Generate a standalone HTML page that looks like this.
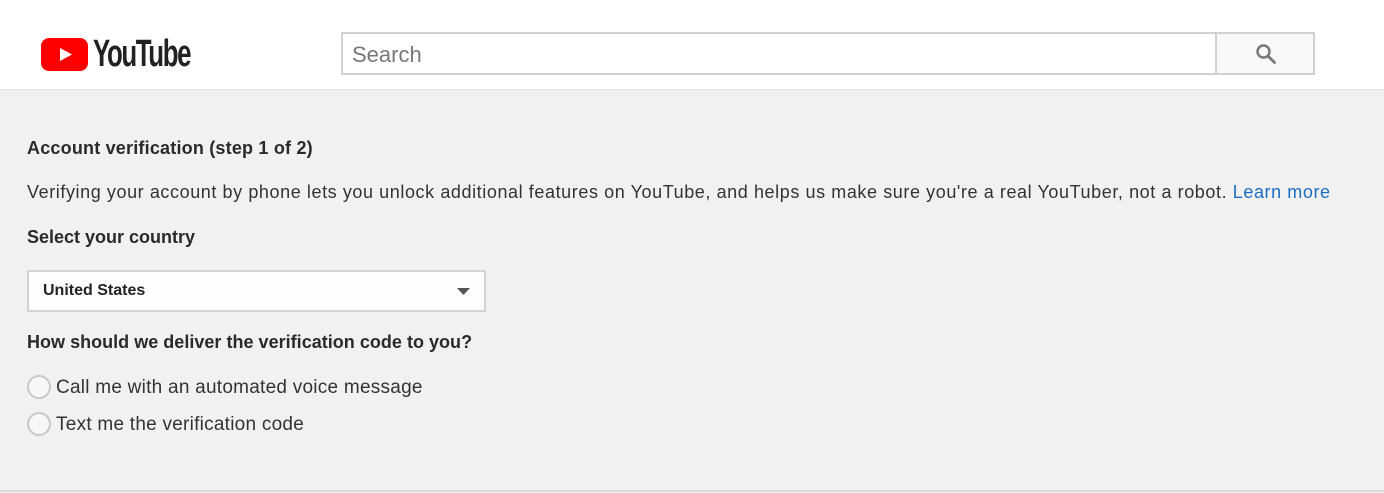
<!DOCTYPE html>
<html><head><style>
*{margin:0;padding:0;box-sizing:border-box}
body{width:1384px;height:493px;background:#f1f1f1;font-family:"Liberation Sans",Arial,sans-serif;color:#222;position:relative;overflow:hidden}
#hd{position:absolute;left:0;top:0;width:1384px;height:90px;background:#fff;border-bottom:1px solid #e4e4e4}
.abs{position:absolute;white-space:nowrap}
#search{position:absolute;left:341px;top:32px;width:875px;height:43px;border:2px solid #d0d0d0;border-right:1px solid #d0d0d0;background:#fff;font-size:22px;color:#777;padding:8px 9px}
#btn{position:absolute;left:1215px;top:32px;width:100px;height:43px;border:2px solid #d0d0d0;background:#f8f8f8}
#sel{position:absolute;left:27px;top:270px;width:459px;height:42px;border:2px solid #d3d3d3;background:#fdfdfd;font-size:16px;padding:10px 14px;font-weight:bold;color:#222}
.radio{position:absolute;left:27px;width:24px;height:24px;border:2px solid #c8c8c8;border-radius:50%;background:#f7f7f7}
.h{font-size:18px;font-weight:bold;color:#2a2a2a}
</style></head><body>
<div id="hd">
<svg class="abs" style="left:41px;top:38px" width="47" height="33" viewBox="0 0 47 33"><rect width="47" height="33" rx="8" fill="#f00"/><path d="M19 10 L31 16.5 L19 23Z" fill="#fff"/></svg>
<div class="abs" style="left:93px;top:33px;font-size:38px;font-weight:bold;color:#222;letter-spacing:-2px;transform:scaleX(0.68);transform-origin:0 0">YouTube</div>
<div id="search">Search</div>
<div id="btn"><svg style="position:absolute;left:38px;top:9px" width="22" height="22" viewBox="0 0 22 22"><circle cx="8.5" cy="8.5" r="6" fill="none" stroke="#777" stroke-width="2.4"/><path d="M13 13 L19.5 19.5" stroke="#777" stroke-width="2.8" stroke-linecap="round"/></svg></div>
</div>
<div class="abs h" style="left:27px;top:138px;letter-spacing:0.2px">Account verification (step 1 of 2)</div>
<div class="abs" style="left:27px;top:182px;font-size:18px;color:#333;letter-spacing:0.585px">Verifying your account by phone lets you unlock additional features on YouTube, and helps us make sure you're a real YouTuber, not a robot. <span style="color:#1a6ec4">Learn more</span></div>
<div class="abs h" style="left:27px;top:227px;letter-spacing:0px">Select your country</div>
<div id="sel">United States<svg style="position:absolute;right:14px;top:16px" width="13" height="7"><path d="M0 0H13L6.5 7Z" fill="#555"/></svg></div>
<div class="abs h" style="left:27px;top:332px;letter-spacing:0.02px">How should we deliver the verification code to you?</div>
<div class="radio" style="top:375px"></div>
<div class="abs" style="left:56px;top:377px;font-size:19px;color:#333;letter-spacing:0.25px">Call me with an automated voice message</div>
<div class="radio" style="top:412px"></div>
<div class="abs" style="left:56px;top:414px;font-size:19px;color:#333;letter-spacing:0.25px">Text me the verification code</div>
<div class="abs" style="left:0;top:490px;width:1384px;height:2px;background:#ddd"></div>
</body></html>
